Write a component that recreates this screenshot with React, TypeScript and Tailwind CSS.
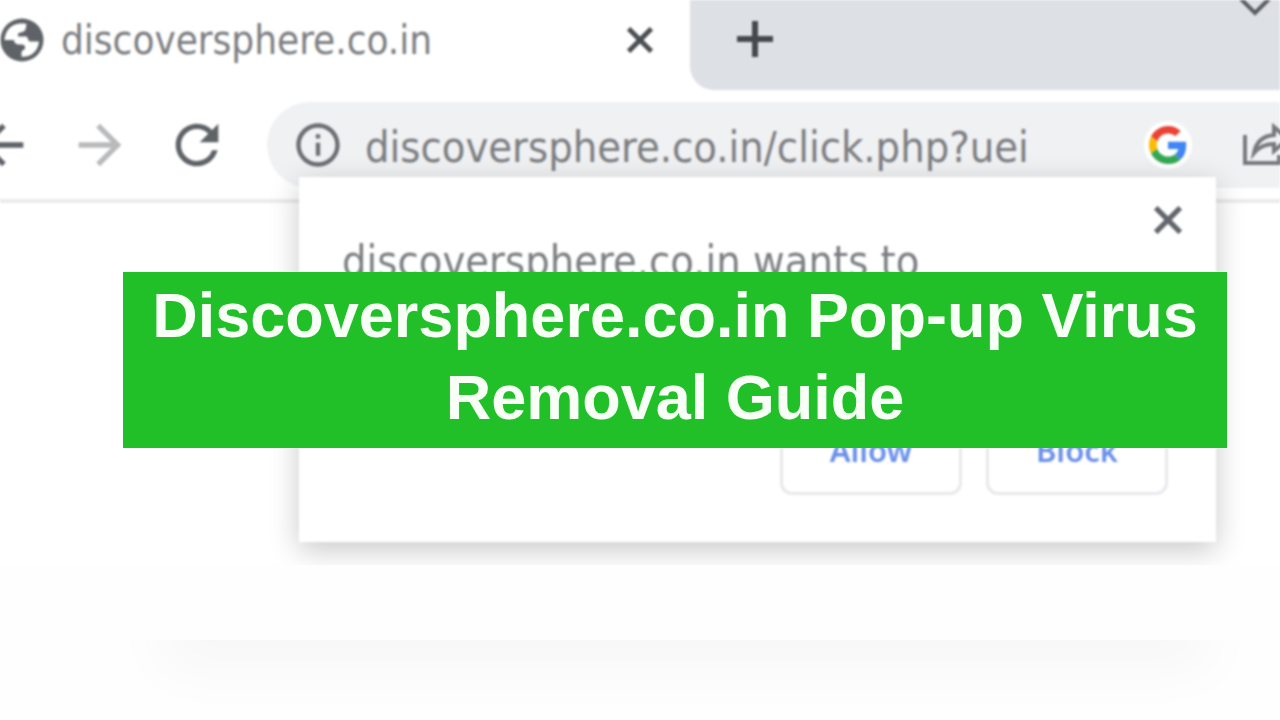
import { MdArrowBack, MdArrowForward, MdRefresh, MdInfoOutline } from 'react-icons/md';

function GlobeIcon() {
  return (
    <svg viewBox="0 0 44 44" className="size-11 shrink-0" aria-hidden="true">
      <circle cx="22" cy="22" r="21.5" fill="#5f6368" />
      <path
        d="M4.500 22C5 15 8.500 10 13 7.500C17 5.500 22 5 26.500 6L25.500 11.500C24.500 14 21 14 18 15.500V18.500H26C28.500 19 27.500 23 30 23.500H39C38.500 29 36 33.500 31.500 36.500C28 38.500 24 39 21.500 38.500V34C22 31.500 25.500 32.500 25 29.500C25 26.500 23 26.500 20 26.500C16 26.500 14.500 25.500 14 22Z"
        fill="#fff"
      />
    </svg>
  );
}

function CrossIcon({ className }: { className: string }) {
  return (
    <svg viewBox="0 0 24 24" className={className} fill="none" stroke="currentColor" strokeWidth="4.500" aria-hidden="true">
      <path d="M1.500 1.500l21 21M22.500 1.500l-21 21" />
    </svg>
  );
}

function PlusIcon() {
  return (
    <svg viewBox="0 0 36 36" className="size-9" fill="none" stroke="currentColor" strokeWidth="6" aria-hidden="true">
      <path d="M18 0v36M0 18h36" />
    </svg>
  );
}

function GoogleIcon() {
  return (
    <svg viewBox="0 0 48 48" className="size-[38px]" aria-hidden="true">
      <path fill="#EA4335" d="M24 9.500c3.540 0 6.710 1.220 9.210 3.600l6.850-6.850C35.900 2.380 30.470 0 24 0 14.620 0 6.510 5.380 2.560 13.220l7.980 6.190C12.430 13.720 17.740 9.500 24 9.500z" />
      <path fill="#4285F4" d="M46.980 24.550c0-1.570-.15-3.090-.38-4.550H24v9.020h12.940c-.58 2.960-2.260 5.480-4.780 7.180l7.730 6c4.510-4.180 7.090-10.360 7.090-17.650z" />
      <path fill="#FBBC05" d="M10.530 28.590c-.48-1.450-.76-2.990-.76-4.590s.27-3.140.76-4.590l-7.980-6.190C.92 16.460 0 20.120 0 24c0 3.880.92 7.540 2.560 10.780l7.970-6.190z" />
      <path fill="#34A853" d="M24 48c6.480 0 11.930-2.130 15.890-5.810l-7.730-6c-2.150 1.450-4.920 2.300-8.160 2.300-6.260 0-11.570-4.220-13.470-9.910l-7.980 6.190C6.510 42.620 14.620 48 24 48z" />
    </svg>
  );
}

function ShareIcon() {
  return (
    <svg viewBox="0 0 48 44" className="h-11 w-12 shrink-0" fill="none" stroke="#77797d" strokeWidth="4" aria-hidden="true">
      <path d="M3 12v28h34v-8" />
      <path d="M12 30c2-11 9-17 20-18V4l14 12-14 12v-7c-9 0-15 3-20 9z" />
    </svg>
  );
}

function TabStrip() {
  return (
    <div className="flex h-[90px] bg-white">
      <div className="flex w-[690px] shrink-0 items-center pr-[37px] pb-[11px]">
        <GlobeIcon />
        <span className="ml-[17px] grow text-[40px] leading-[48px] text-[#7b7d80]">discoversphere.co.in</span>
        <button type="button" aria-label="Close tab" className="text-[#4b4e52]">
          <CrossIcon className="size-[26px]" />
        </button>
      </div>
      <div className="flex grow items-start justify-between rounded-bl-[24px] bg-[#dde0e5] pl-[47px]">
        <button type="button" aria-label="New tab" className="mt-[21px] text-[#45484c]">
          <PlusIcon />
        </button>
        <button type="button" aria-label="Search tabs" className="mr-2">
          <svg viewBox="0 0 34 18" className="h-[18px] w-[34px]" fill="none" stroke="#5a5d61" strokeWidth="4">
            <path d="M3 -1l14 14L31 -1" />
          </svg>
        </button>
      </div>
    </div>
  );
}

function Toolbar() {
  return (
    <div className="flex h-[113px] items-start border-b-[4px] border-[#ebebeb] bg-white pt-[12px]">
      <div className="-ml-[30px] flex h-[86px] shrink-0 items-center text-[#5f6368]">
        <button type="button" aria-label="Back">
          <MdArrowBack className="size-16" />
        </button>
        <button type="button" aria-label="Forward" className="ml-[34px] text-[#b9babc]">
          <MdArrowForward className="size-16" />
        </button>
        <button type="button" aria-label="Reload" className="ml-[33px]">
          <MdRefresh className="size-16" />
        </button>
      </div>
      <div className="ml-[38px] flex h-[86px] min-w-0 grow items-center rounded-l-full bg-[#f0f1f3] pl-[25px]">
        <MdInfoOutline className="size-[52px] shrink-0 text-[#6b6e73]" />
        <input
          type="text"
          aria-label="Address"
          readOnly
          value="discoversphere.co.in/click.php?uei"
          className="ml-[21px] h-[60px] w-[668px] min-w-0 bg-transparent pt-1 text-[43px] leading-[56px] text-[#7b7d80] outline-none"
        />
        <span className="ml-auto grid size-12 shrink-0 place-items-center rounded-full bg-white">
          <GoogleIcon />
        </span>
        <button type="button" aria-label="Share" className="-mr-[10px] ml-[50px] shrink-0">
          <ShareIcon />
        </button>
      </div>
    </div>
  );
}

function PermissionPopup() {
  return (
    <div
      role="dialog"
      aria-label="Notification permission"
      className="absolute top-[177px] right-16 left-[299px] flex h-[365px] flex-col justify-between bg-white pr-[48px] pb-[47px] pl-[43px] shadow-[0_8px_28px_0_rgba(0,0,0,0.22)]"
    >
      <div className="flex items-start justify-between">
        <p className="mt-[56px] text-[43px] leading-[56px] whitespace-nowrap text-[#7b7d80]">discoversphere.co.in wants to</p>
        <button type="button" aria-label="Dismiss" className="-mr-[14px] mt-[29px] text-[#63666b]">
          <CrossIcon className="size-[28px]" />
        </button>
      </div>
      <div className="flex justify-end gap-6 font-['Noto_Sans',sans-serif] text-[31px] font-semibold text-[#6a90ea]">
        <button type="button" className="h-[86px] w-[182px] rounded-xl border-[3px] border-[#e8e9ec] pb-1">
          Allow
        </button>
        <button type="button" className="h-[86px] w-[182px] rounded-xl border-[3px] border-[#e8e9ec] pb-1">
          Block
        </button>
      </div>
    </div>
  );
}

export default function App() {
  return (
    <main className="min-h-screen overflow-hidden bg-[#fefefe]">
      <div className="relative h-[565px] overflow-hidden bg-white">
        <div className="h-full font-['DejaVu_Sans_Condensed','DejaVu_Sans',sans-serif] blur-[1px]">
          <TabStrip />
          <Toolbar />
          <PermissionPopup />
        </div>
        <h1 className="absolute top-[272px] right-[53px] left-[123px] bg-[#21c028] px-5 pt-[2px] pb-[10px] text-center font-['Liberation_Sans',Arial,sans-serif] text-[63px] leading-[82px] font-bold text-[#f7fff7]">
          Discoversphere.co.in Pop-up Virus Removal Guide
        </h1>
      </div>
      <div className="mt-[75px] h-20 overflow-hidden pr-[90px] pl-[180px]">
        <div className="-mt-10 h-10 shadow-[0_10px_60px_20px_rgba(0,0,0,0.03)]" />
      </div>
    </main>
  );
}
